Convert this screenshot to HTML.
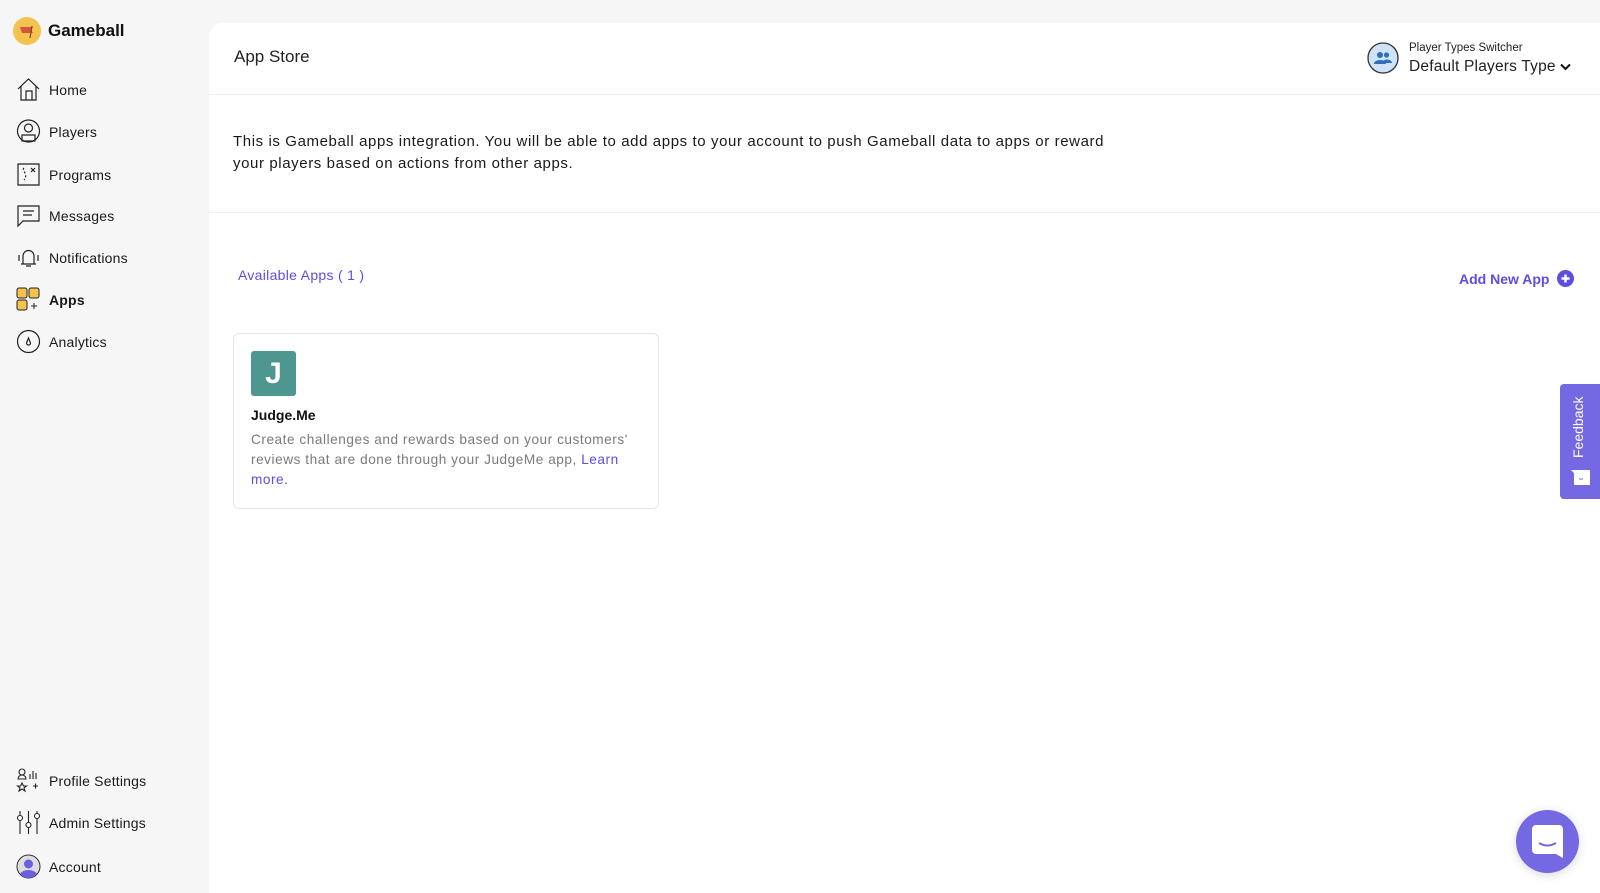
<!DOCTYPE html>
<html><head><meta charset="utf-8"><style>
*{box-sizing:border-box;margin:0;padding:0}
body{width:1600px;height:893px;background:#f6f6f6;font-family:"Liberation Sans",sans-serif;color:#1a1a1a;position:relative;overflow:hidden}
.side{position:absolute;left:0;top:0;width:209px;height:893px}
.logo{position:absolute;left:13px;top:17px;display:flex;align-items:center}
.logo .c{width:28px;height:28px;border-radius:50%;background:#f3c24f;position:relative}
.logo b{font-size:17px;margin-left:7px;color:#111}
.item{position:absolute;left:16px;display:flex;align-items:center;font-size:14px;color:#1a1a1a;letter-spacing:.2px}
.item svg{width:25px;height:25px;margin-right:8px}
.main{position:absolute;left:209px;top:23px;width:1391px;height:870px;background:#fff;border-top-left-radius:14px}
.hdr{height:72px;border-bottom:1px solid #f0f0f0;position:relative}
.hdr h1{position:absolute;left:25px;top:24px;font-size:17px;font-weight:normal;color:#222}
.desc{position:absolute;left:24px;top:108px;font-size:15px;line-height:22px;color:#1a1a1a;width:1100px;letter-spacing:.6px}
.div2{position:absolute;left:0;top:189px;width:100%;border-top:1px solid #f0f0f0}
.avail{position:absolute;left:29px;top:244px;font-size:14px;color:#5b4ee0;letter-spacing:.3px}
.add{position:absolute;left:1250px;top:247px;font-size:14px;color:#5b4ee0;font-weight:bold;display:flex;align-items:center}
.card{position:absolute;left:24px;top:310px;width:426px;height:176px;border:1px solid #e6e6e6;border-radius:6px}
.jl{position:absolute;left:17px;top:17px;width:45px;height:45px;background:#4e9690;border-radius:3px;color:#fff;font-weight:bold;font-size:30px;text-align:center;line-height:46px}
.card h3{position:absolute;left:17px;top:73px;font-size:14px;color:#111}
.card p{position:absolute;left:17px;top:96px;width:405px;font-size:13.6px;line-height:20px;color:#7a7a7a;letter-spacing:.55px}
.card p a{color:#5b4ee0}
.fb{position:absolute;left:1560px;top:384px;width:40px;height:115px;background:#7569e3;border-radius:4px 0 0 4px}
.fb span{position:absolute;left:10px;top:74px;transform:rotate(-90deg);transform-origin:0 0;color:#fff;font-size:14px;white-space:nowrap}
.chat{position:absolute;left:1516px;top:810px;width:63px;height:63px;border-radius:50%;background:#7569e3;box-shadow:0 2px 10px rgba(0,0,0,.15)}
</style></head><body>
<div class="side">
 <div class="logo"><div class="c"><svg width="28" height="28" viewBox="0 0 28 28"><path d="M7 10h13l-2 3 2 3H9z" fill="#d9533b"/><path d="M19 9l-2 12" stroke="#7a4a2a" stroke-width="1.2"/></svg></div><b>Gameball</b></div>
 <div class="item" style="top:77px"><svg viewBox="0 0 25 25" fill="none" stroke="#222" stroke-width="1.2"><path d="M2 12L12.5 2 23 12M5 9v14h15V9M10 23v-9h6v9"/></svg>Home</div>
 <div class="item" style="top:119px"><svg viewBox="0 0 25 25" fill="none" stroke="#222" stroke-width="1.2"><circle cx="12.5" cy="12" r="11"/><circle cx="12.5" cy="9" r="4"/><path d="M6 16h13v6H6z"/></svg>Players</div>
 <div class="item" style="top:162px"><svg viewBox="0 0 25 25" fill="none" stroke="#222" stroke-width="1.2"><path d="M2 2h21v21H2z"/><path d="M8 6c-3 2 5 6 0 12" stroke-dasharray="2 2"/><path d="M15 6l4 4M19 6l-4 4"/></svg>Programs</div>
 <div class="item" style="top:203px"><svg viewBox="0 0 25 25" fill="none" stroke="#222" stroke-width="1.2"><path d="M2 3h21v15H7l-5 5z M7 8h11M7 12h9"/></svg>Messages</div>
 <div class="item" style="top:245px"><svg viewBox="0 0 25 25" fill="none" stroke="#222" stroke-width="1.2"><path d="M7 19V11a5.5 5.5 0 0111 0v8H7zM5 19h15M10 21h5M3 10v6M22 10v6"/></svg>Notifications</div>
 <div class="item" style="top:287px;font-weight:bold"><svg viewBox="0 0 25 25" stroke="#222" stroke-width="1"><rect x="1" y="1" width="10" height="10" rx="2" fill="#f3c24f"/><rect x="13" y="1" width="10" height="10" rx="2" fill="#f3c24f"/><rect x="1" y="13" width="10" height="10" rx="2" fill="#f3c24f"/><path d="M18 16v6M15 19h6"/></svg>Apps</div>
 <div class="item" style="top:329px"><svg viewBox="0 0 25 25" fill="none" stroke="#222" stroke-width="1.2"><circle cx="12.5" cy="12.5" r="11"/><path d="M12.5 9l2 5a2 2 0 11-4 0z"/></svg>Analytics</div>
 <div class="item" style="top:768px"><svg viewBox="0 0 25 25" fill="none" stroke="#222" stroke-width="1.1"><circle cx="6" cy="4" r="3"/><path d="M2 11a4 4 0 018 0zM14 6v5M17 3v8M20 5v6M6 15l1.5 3h3l-2.5 2 1 3-3-2-3 2 1-3-2.5-2h3zM17 18h5M19.5 15.5v5"/></svg>Profile Settings</div>
 <div class="item" style="top:810px"><svg viewBox="0 0 25 25" fill="none" stroke="#222" stroke-width="1.1"><path d="M4 1v23M12.5 1v23M21 1v23"/><circle cx="4" cy="8" r="2.5" fill="#fff"/><circle cx="12.5" cy="15" r="2.5" fill="#fff"/><circle cx="21" cy="6" r="2.5" fill="#fff"/></svg>Admin Settings</div>
 <div class="item" style="top:854px"><svg viewBox="0 0 25 25"><circle cx="12.5" cy="12.5" r="11.5" fill="#ddd" stroke="#333"/><circle cx="12.5" cy="10" r="4.5" fill="#6b5fe0"/><path d="M4 20a9 6 0 0117 0 11 11 0 01-17 0z" fill="#6b5fe0"/></svg>Account</div>
</div>
<div class="main">
 <div class="hdr"><h1>App Store</h1>
  <svg style="position:absolute;left:1158px;top:19px" width="32" height="32" viewBox="0 0 32 32"><circle cx="16" cy="16" r="15" fill="#cfe3f7" stroke="#333" stroke-width="1.3"/><circle cx="13" cy="13" r="3" fill="#2f6fb8"/><circle cx="19.5" cy="13" r="2.6" fill="#2f6fb8"/><path d="M7 22a6 4 0 0112 0z" fill="#2f6fb8"/><path d="M15 21a5 3.5 0 0110 0z" fill="#2f6fb8"/></svg>
  <div style="position:absolute;left:1200px;top:19px;font-size:11.5px;color:#222">Player Types Switcher</div>
  <div style="position:absolute;left:1200px;top:35px;font-size:15.5px;color:#222;letter-spacing:.2px">Default Players Type <svg width="11" height="8" viewBox="0 0 11 8"><path d="M1 1.5l4.5 4.5L10 1.5" stroke="#111" stroke-width="2" fill="none"/></svg></div>
 </div>
 <div class="desc">This is Gameball apps integration. You will be able to add apps to your account to push Gameball data to apps or reward<br>your players based on actions from other apps.</div>
 <div class="div2"></div>
 <div class="avail">Available Apps ( 1 )</div>
 <div class="add">Add New App <svg style="margin-left:8px" width="17" height="17" viewBox="0 0 17 17"><circle cx="8.5" cy="8.5" r="8.5" fill="#5b4ee0"/><path d="M8.5 4.5v8M4.5 8.5h8" stroke="#fff" stroke-width="2.4"/></svg></div>
 <div class="card"><div class="jl">J</div><h3>Judge.Me</h3><p>Create challenges and rewards based on your customers'<br>reviews that are done through your JudgeMe app, <a>Learn<br>more.</a></p></div>
</div>
<div class="fb"><span>Feedback</span><svg style="position:absolute;left:11px;top:86px" width="19" height="15" viewBox="0 0 19 15"><path d="M0 0h19v15H3V3z" fill="#fff"/><path d="M8 8.5q2 1.5 4 0" stroke="#7569e3" fill="none"/></svg></div>
<div class="chat"><svg style="position:absolute;left:16px;top:15px" width="31" height="33" viewBox="0 0 31 33"><path d="M4 0h23a4 4 0 014 4v29l-7-4H4a4 4 0 01-4-4V4a4 4 0 014-4z" fill="#fff"/><path d="M7 18q8.5 5 17 0" stroke="#7569e3" stroke-width="2" fill="none"/></svg></div>
</body></html>
